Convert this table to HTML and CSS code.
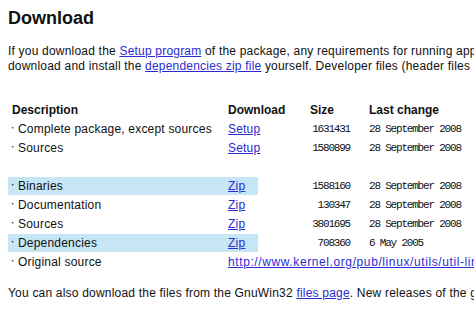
FILE: index.html
```html
<!DOCTYPE html>
<html>
<head>
<meta charset="utf-8">
<link rel="stylesheet" href="styles.css">
</head>
<body>
<h1 class="title">Download</h1>
<p class="intro">If you download the <a href="#">Setup program</a> of the package, any requirements for running applications, such as dynamic-link libraries (DLL's) from the<br>download and install the <a href="#">dependencies zip file</a> yourself. Developer files (header files and libraries) from other packages are</p>
<table class="files">
  <thead>
    <tr>
      <th class="desc">Description</th>
      <th class="dl">Download</th>
      <th class="size">Size</th>
      <th class="date">Last change</th>
    </tr>
  </thead>
  <tbody>
    <tr>
      <td class="desc"><span class="dot">・</span>Complete package, except sources</td>
      <td class="dl"><span class="dlbox"><a href="#">Setup</a></span></td>
      <td class="size num">1631431</td>
      <td class="date num">28 September 2008</td>
    </tr>
    <tr>
      <td class="desc"><span class="dot">・</span>Sources</td>
      <td class="dl"><span class="dlbox"><a href="#">Setup</a></span></td>
      <td class="size num">1580899</td>
      <td class="date num">28 September 2008</td>
    </tr>
    <tr class="spacer"><td colspan="4"></td></tr>
    <tr class="hl">
      <td class="desc"><span class="dot">・</span>Binaries</td>
      <td class="dl"><span class="dlbox"><a href="#">Zip</a></span></td>
      <td class="size num">1588160</td>
      <td class="date num">28 September 2008</td>
    </tr>
    <tr>
      <td class="desc"><span class="dot">・</span>Documentation</td>
      <td class="dl"><span class="dlbox"><a href="#">Zip</a></span></td>
      <td class="size num">130347</td>
      <td class="date num">28 September 2008</td>
    </tr>
    <tr>
      <td class="desc"><span class="dot">・</span>Sources</td>
      <td class="dl"><span class="dlbox"><a href="#">Zip</a></span></td>
      <td class="size num">3801695</td>
      <td class="date num">28 September 2008</td>
    </tr>
    <tr class="hl">
      <td class="desc"><span class="dot">・</span>Dependencies</td>
      <td class="dl"><span class="dlbox"><a href="#">Zip</a></span></td>
      <td class="size num">708360</td>
      <td class="date num">6 May 2005</td>
    </tr>
    <tr>
      <td class="desc"><span class="dot">・</span>Original source</td>
      <td class="dl url" colspan="3"><a href="#">http://www.kernel.org/pub/linux/utils/util-linux/util-linux-2.12r.tar.gz</a></td>
    </tr>
  </tbody>
</table>
<p class="outro">You can also download the files from the GnuWin32 <a href="#">files page</a>. New releases of the generic sources are announced on the project page.</p>
</body>
</html>
```

FILE: styles.css
```css
html, body {
  margin: 0;
  padding: 0;
  background: #ffffff;
  overflow: hidden;
}
body {
  padding: 7px 8px 0 8px;
  font-family: "Liberation Sans", Arial, sans-serif;
  font-size: 12px;
  letter-spacing: 0.2px;
  color: #111111;
  width: 1000px;
}
a {
  color: #2b2bd0;
  text-decoration: underline;
}
.title {
  margin: 0 0 15px 0;
  font-size: 18px;
  line-height: 22px;
  font-weight: bold;
  letter-spacing: 0;
  color: #111111;
}
.intro {
  margin: 0 0 26px 0;
  line-height: 15px;
  white-space: nowrap;
}
.files {
  border-collapse: separate;
  border-spacing: 0 1px;
  margin: 0;
}
.files th, .files td {
  padding: 0;
  height: 18px;
  line-height: 18px;
  text-align: left;
  vertical-align: middle;
  white-space: nowrap;
}
.files th {
  font-weight: bold;
  letter-spacing: 0;
}
.files th.desc {
  padding-left: 4px;
}
.files .desc {
  width: 216px;
}
.dot {
  display: inline-block;
  width: 10px;
  font-size: 9px;
  line-height: 10px;
  vertical-align: top;
  padding-top: 3px;
  letter-spacing: 0;
}
.files .dl {
  width: 82px;
}
.files .url {
  letter-spacing: 0.6px;
}
.dlbox {
  display: inline-block;
  width: 30px;
}
.files .size {
  width: 40px;
}
.files td.size {
  text-align: right;
}
.files .date {
  padding-left: 19px;
}
.num {
  font-family: "Liberation Mono", "Courier New", monospace;
  font-size: 11px;
  letter-spacing: -1.2px;
  color: #111111;
}
.spacer td {
  height: 18px;
}
.hl td.desc {
  background: #c6e6f6;
}
.hl .dlbox {
  background: #c6e6f6;
}
.outro {
  margin: 14px 0 0 0;
  line-height: 15px;
  white-space: nowrap;
}
```
